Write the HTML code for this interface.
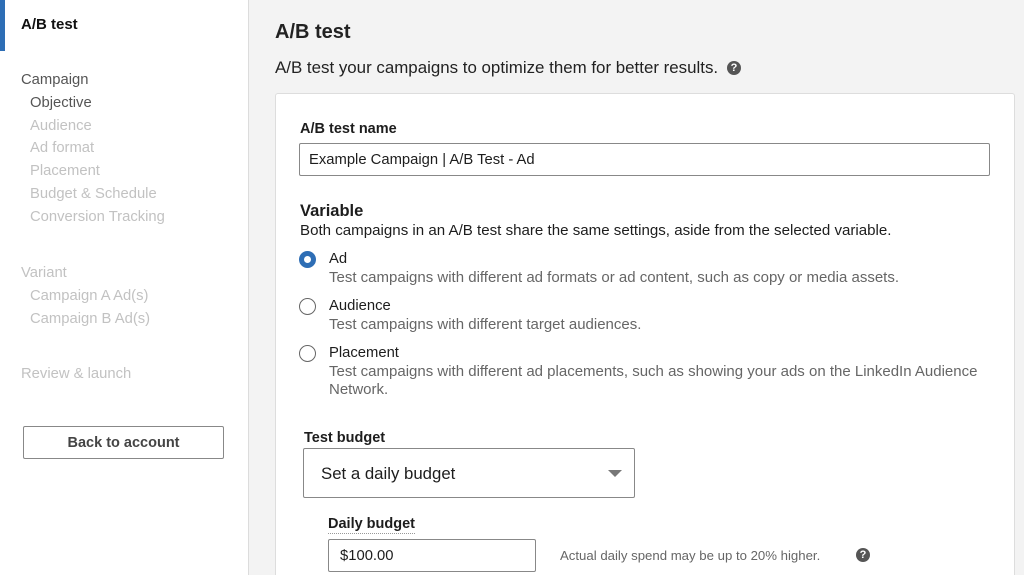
<!DOCTYPE html>
<html style="width:1024px;height:575px;overflow:hidden"><head><meta charset="utf-8"><style>
*{margin:0;padding:0;box-sizing:border-box}
body{width:1024px;height:575px;overflow:hidden;background:#f3f3f3;font-family:"Liberation Sans",sans-serif;position:relative;color:#1d1d1d}
.a{position:absolute;white-space:nowrap}
#side{position:absolute;left:0;top:0;width:249px;height:575px;background:#fff;border-right:1px solid #dcdcdc}
.g{color:#c2c2c2;font-size:14.8px}
.q{display:inline-block;width:14px;height:14px;border-radius:50%;background:#555;color:#fff;font-size:11px;font-weight:bold;text-align:center;line-height:14px}
.rad{position:absolute;width:17px;height:17px;border-radius:50%;border:1.5px solid #666;background:#fff}
.d{color:#666;font-size:15px}
</style></head><body>
<div id="side">
 <div class="a" style="left:0;top:0;width:5px;height:51px;background:#2e6eb5"></div>
 <div class="a" style="left:21px;top:16px;font-size:15px;font-weight:bold;color:#111">A/B test</div>
 <div class="a" style="left:21px;top:72px;font-size:14.8px;color:#555">Campaign</div>
 <div class="a" style="left:30px;top:95px;font-size:14.8px;color:#555">Objective</div>
 <div class="a g" style="left:30px;top:118px">Audience</div>
 <div class="a g" style="left:30px;top:140px">Ad format</div>
 <div class="a g" style="left:30px;top:163px">Placement</div>
 <div class="a g" style="left:30px;top:186px">Budget &amp; Schedule</div>
 <div class="a g" style="left:30px;top:209px">Conversion Tracking</div>
 <div class="a g" style="left:21px;top:265px">Variant</div>
 <div class="a g" style="left:30px;top:288px">Campaign A Ad(s)</div>
 <div class="a g" style="left:30px;top:311px">Campaign B Ad(s)</div>
 <div class="a g" style="left:21px;top:366px">Review &amp; launch</div>
 <div class="a" style="left:23px;top:426px;width:201px;height:33px;border:1px solid #888;border-radius:2px;text-align:center;line-height:33px;font-size:14.5px;font-weight:bold;color:#444">Back to account</div>
</div>
<div class="a" style="left:275px;top:21px;font-size:20px;font-weight:bold;color:#222">A/B test</div>
<div class="a" style="left:275px;top:58px;font-size:16.9px;color:#222">A/B test your campaigns to optimize them for better results.</div>
<span class="a q" style="left:727px;top:61px">?</span>
<div class="a" style="left:275px;top:93px;width:740px;height:490px;background:#fff;border:1px solid #ddd;border-radius:3px"></div>
<div class="a" style="left:300px;top:121px;font-size:14.5px;font-weight:bold">A/B test name</div>
<div class="a" style="left:299px;top:143px;width:691px;height:33px;border:1px solid #888;border-radius:2px;padding-left:9px;line-height:33px;font-size:14.8px">Example Campaign | A/B Test - Ad</div>
<div class="a" style="left:300px;top:202px;font-size:16.5px;font-weight:bold">Variable</div>
<div class="a" style="left:300px;top:222px;font-size:15.1px">Both campaigns in an A/B test share the same settings, aside from the selected variable.</div>
<div class="rad" style="left:299px;top:251px;border:5px solid #2e6eb5"></div>
<div class="a" style="left:329px;top:251px;font-size:14.8px">Ad</div>
<div class="a d" style="left:329px;top:269px">Test campaigns with different ad formats or ad content, such as copy or media assets.</div>
<div class="rad" style="left:299px;top:298px"></div>
<div class="a" style="left:329px;top:298px;font-size:14.8px">Audience</div>
<div class="a d" style="left:329px;top:316px">Test campaigns with different target audiences.</div>
<div class="rad" style="left:299px;top:345px"></div>
<div class="a" style="left:329px;top:345px;font-size:14.8px">Placement</div>
<div class="a d" style="left:329px;top:363px">Test campaigns with different ad placements, such as showing your ads on the LinkedIn Audience</div>
<div class="a d" style="left:329px;top:381px">Network.</div>
<div class="a" style="left:304px;top:430px;font-size:14.5px;font-weight:bold">Test budget</div>
<div class="a" style="left:303px;top:448px;width:332px;height:50px;border:1px solid #888;border-radius:2px;padding-left:17px;line-height:50px;font-size:16.8px">Set a daily budget
 <div class="a" style="right:12px;top:21px;width:0;height:0;border-left:7px solid transparent;border-right:7px solid transparent;border-top:7px solid #777"></div></div>
<div class="a" style="left:328px;top:516px;font-size:14.5px;font-weight:bold;border-bottom:1px dotted #999;padding-bottom:1px">Daily budget</div>
<div class="a" style="left:328px;top:539px;width:208px;height:33px;border:1px solid #888;border-radius:2px;padding-left:11px;line-height:33px;font-size:14.8px">$100.00</div>
<div class="a" style="left:560px;top:548px;font-size:13.2px;color:#666">Actual daily spend may be up to 20% higher.</div>
<span class="a q" style="left:856px;top:548px">?</span>
</body></html>
